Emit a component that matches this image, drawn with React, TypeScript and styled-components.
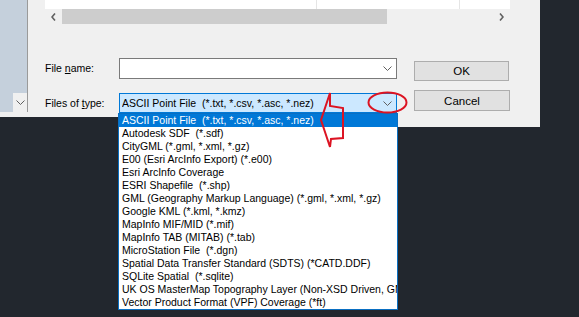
import styled, { createGlobalStyle } from "styled-components";

const GlobalStyle = createGlobalStyle`
  html, body {
    margin: 0;
    padding: 0;
    background: #22272e;
  }
  * {
    box-sizing: border-box;
  }
`;

const Page = styled.div`
  position: relative;
  width: 579px;
  height: 317px;
  overflow: hidden;
  background: #22272e;
  font-family: "Liberation Sans", Arial, sans-serif;
  font-size: 10.5px;
  color: #000;
`;

const Dialog = styled.div`
  width: 540px;
  display: flex;
  flex-direction: column;
`;

const Body = styled.div`
  display: flex;
  height: 117px;
  background: #f0f0f0;
`;

const LeftPane = styled.div`
  width: 28px;
  height: 112px;
  background: #c5d0dc;
  border-right: 1px solid #9a9a9a;
  display: flex;
  flex-direction: column;
  justify-content: flex-end;
  align-items: flex-end;
`;

const ScrollDown = styled.div`
  width: 14px;
  height: 19px;
  background: #f0f0f0;
  display: flex;
  align-items: center;
  justify-content: center;
`;

const Content = styled.div`
  padding-left: 17px;
  display: flex;
  flex-direction: column;
`;

const ListTail = styled.div`
  width: 465px;
  height: 9px;
  background: #fff;
  display: flex;
`;

const ListCol = styled.div<{ $w: number }>`
  width: ${(p) => p.$w}px;
  height: 100%;
  border-right: 1px solid #e5e5e5;
`;

const HScroll = styled.div`
  width: 465px;
  height: 15px;
  background: #f0f0f0;
  display: flex;
`;

const ScrollBtn = styled.div`
  width: 17px;
  height: 100%;
  display: flex;
  align-items: center;
  justify-content: center;
`;

const Thumb = styled.div`
  width: 325px;
  height: 100%;
  background: #cdcdcd;
`;

const Track = styled.div`
  flex: 1;
`;

const Form = styled.div`
  margin-top: 34px;
  display: flex;
  flex-direction: column;
  gap: 9px;
`;

const Row = styled.div`
  display: flex;
  align-items: flex-start;
`;

const Label = styled.div<{ $top?: number }>`
  width: 74px;
  height: 20px;
  margin-top: ${(p) => p.$top ?? 0}px;
  display: flex;
  align-items: center;

  u {
    text-decoration: underline;
    text-underline-offset: 1px;
  }
`;

const Field = styled.div<{ $active?: boolean; $top?: number }>`
  width: 278px;
  height: ${(p) => (p.$active ? 20 : 21)}px;
  margin-top: ${(p) => p.$top ?? 0}px;
  background: ${(p) => (p.$active ? "#cce8ff" : "#fff")};
  border: 1px solid ${(p) => (p.$active ? "#0078d7" : "#7a7a7a")};
  display: flex;
  align-items: center;
  padding: 0 4px 0 2px;
`;

const FieldText = styled.div`
  flex: 1;
  white-space: pre;
  overflow: hidden;
`;

const Button = styled.div<{ $top?: number; $h: number; $w: number }>`
  width: ${(p) => p.$w}px;
  height: ${(p) => p.$h}px;
  margin-top: ${(p) => p.$top ?? 0}px;
  margin-left: 17px;
  background: #e1e1e1;
  border: 1px solid #adadad;
  display: flex;
  align-items: center;
  justify-content: center;
  font-size: 11.5px;
`;

const Footer = styled.div`
  height: 10px;
  display: flex;
`;

const FooterFill = styled.div`
  margin-left: 398px;
  width: 142px;
  background: #f0f0f0;
`;

const DropList = styled.div`
  position: absolute;
  left: 118px;
  top: 113px;
  width: 280px;
  background: #fff;
  border: 1px solid #0a6fc2;
  display: flex;
  flex-direction: column;
`;

const Item = styled.div<{ $selected?: boolean }>`
  height: 13px;
  line-height: 13px;
  padding-left: 3px;
  white-space: pre;
  overflow: hidden;
  background: ${(p) => (p.$selected ? "#0078d7" : "transparent")};
  color: ${(p) => (p.$selected ? "#fff" : "#000")};
`;

const Overlay = styled.svg`
  position: absolute;
  left: 0;
  top: 0;
  pointer-events: none;
`;

const Chevron = () => (
  <svg width="9" height="5" viewBox="0 0 9 5">
    <polyline points="0.5,0.5 4.5,4.5 8.5,0.5" fill="none" stroke="#606060" strokeWidth="1" />
  </svg>
);

const Arrow = ({ dir }: { dir: "left" | "right" }) => (
  <svg width="5" height="8" viewBox="0 0 5 8">
    <polyline
      points={dir === "left" ? "4,0.5 1,4 4,7.5" : "1,0.5 4,4 1,7.5"}
      fill="none"
      stroke="#606060"
      strokeWidth="1.6"
    />
  </svg>
);

const fileTypes = [
  "ASCII Point File  (*.txt, *.csv, *.asc, *.nez)",
  "Autodesk SDF  (*.sdf)",
  "CityGML (*.gml, *.xml, *.gz)",
  "E00 (Esri ArcInfo Export) (*.e00)",
  "Esri ArcInfo Coverage",
  "ESRI Shapefile  (*.shp)",
  "GML (Geography Markup Language) (*.gml, *.xml, *.gz)",
  "Google KML (*.kml, *.kmz)",
  "MapInfo MIF/MID (*.mif)",
  "MapInfo TAB (MITAB) (*.tab)",
  "MicroStation File  (*.dgn)",
  "Spatial Data Transfer Standard (SDTS) (*CATD.DDF)",
  "SQLite Spatial  (*.sqlite)",
  "UK OS MasterMap Topography Layer (Non-XSD Driven, GML)",
  "Vector Product Format (VPF) Coverage (*ft)",
];

export default function App() {
  return (
    <>
      <GlobalStyle />
      <Page>
        <Dialog>
          <Body>
            <LeftPane>
              <ScrollDown>
                <Chevron />
              </ScrollDown>
            </LeftPane>
            <Content>
              <ListTail>
                <ListCol $w={272} />
                <ListCol $w={143} />
              </ListTail>
              <HScroll>
                <ScrollBtn>
                  <Arrow dir="left" />
                </ScrollBtn>
                <Thumb />
                <Track />
                <ScrollBtn>
                  <Arrow dir="right" />
                </ScrollBtn>
              </HScroll>
              <Form>
                <Row>
                  <Label>
                    <span>
                      File <u>n</u>ame:
                    </span>
                  </Label>
                  <Field>
                    <FieldText />
                    <Chevron />
                  </Field>
                  <Button $top={3} $w={95} $h={20}>
                    OK
                  </Button>
                </Row>
                <Row>
                  <Label $top={3}>
                    <span>
                      Files of <u>t</u>ype:
                    </span>
                  </Label>
                  <Field $active $top={3}>
                    <FieldText>{fileTypes[0]}</FieldText>
                    <Chevron />
                  </Field>
                  <Button $w={96} $h={21}>
                    Cancel
                  </Button>
                </Row>
              </Form>
            </Content>
          </Body>
          <Footer>
            <FooterFill />
          </Footer>
        </Dialog>

        <DropList>
          {fileTypes.map((t, i) => (
            <Item key={t} $selected={i === 0}>
              {t}
            </Item>
          ))}
        </DropList>

        <Overlay width="579" height="317" viewBox="0 0 579 317">
          <ellipse cx="387.5" cy="102.5" rx="19" ry="10" fill="none" stroke="#dc1423" strokeWidth="2" />
          <polygon
            points="330,93 321,120 330,147 331,139 343,138 343,108 330,106"
            fill="none"
            stroke="#dc1423"
            strokeWidth="2"
            strokeLinejoin="miter"
          />
        </Overlay>
      </Page>
    </>
  );
}
